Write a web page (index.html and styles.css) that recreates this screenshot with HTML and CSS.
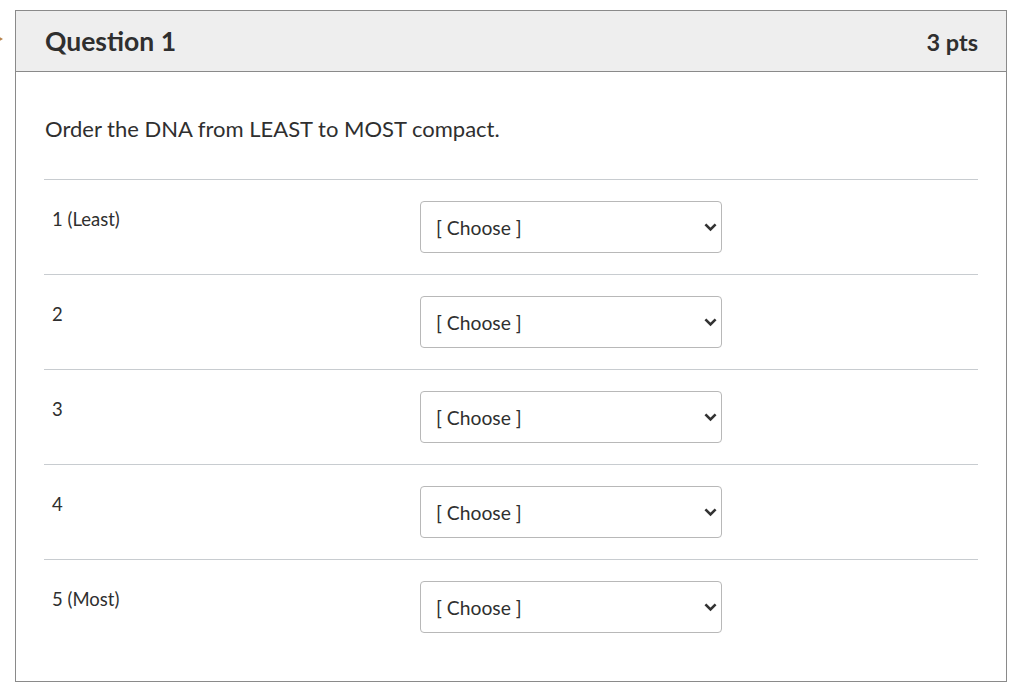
FILE: index.html
```html
<!DOCTYPE html>
<html lang="en">
<head>
<meta charset="utf-8">
<title>Question 1</title>
<link rel="stylesheet" href="styles.css">
</head>
<body>
<div class="flag"></div>
<div class="question">
  <div class="q-header">
    <span class="q-name">Question 1</span>
    <span class="q-pts">3 pts</span>
  </div>
  <div class="q-body">
    <p class="q-text">Order the DNA from LEAST to MOST compact.</p>
    <div class="answers">
      <div class="row">
        <div class="label">1 (Least)</div>
        <div class="select"><span>[ Choose ]</span><svg class="chev" viewBox="0 0 13 9" width="13" height="9"><path d="M1.4 1.4 L6.5 6.5 L11.6 1.4" fill="none" stroke="#333" stroke-width="2.6"/></svg></div>
      </div>
      <div class="row">
        <div class="label">2</div>
        <div class="select"><span>[ Choose ]</span><svg class="chev" viewBox="0 0 13 9" width="13" height="9"><path d="M1.4 1.4 L6.5 6.5 L11.6 1.4" fill="none" stroke="#333" stroke-width="2.6"/></svg></div>
      </div>
      <div class="row">
        <div class="label">3</div>
        <div class="select"><span>[ Choose ]</span><svg class="chev" viewBox="0 0 13 9" width="13" height="9"><path d="M1.4 1.4 L6.5 6.5 L11.6 1.4" fill="none" stroke="#333" stroke-width="2.6"/></svg></div>
      </div>
      <div class="row">
        <div class="label">4</div>
        <div class="select"><span>[ Choose ]</span><svg class="chev" viewBox="0 0 13 9" width="13" height="9"><path d="M1.4 1.4 L6.5 6.5 L11.6 1.4" fill="none" stroke="#333" stroke-width="2.6"/></svg></div>
      </div>
      <div class="row">
        <div class="label">5 (Most)</div>
        <div class="select"><span>[ Choose ]</span><svg class="chev" viewBox="0 0 13 9" width="13" height="9"><path d="M1.4 1.4 L6.5 6.5 L11.6 1.4" fill="none" stroke="#333" stroke-width="2.6"/></svg></div>
      </div>
    </div>
  </div>
</div>
</body>
</html>
```

FILE: styles.css
```css
html, body {
  margin: 0;
  padding: 0;
  background: #fff;
}
body {
  font-family: Lato, "Noto Sans", sans-serif;
  color: #2f2f2f;
  position: relative;
  height: 691px;
  overflow: hidden;
}
.flag {
  position: absolute;
  left: -4px;
  top: 35px;
  width: 0;
  height: 0;
  border-top: 4px solid transparent;
  border-bottom: 4px solid transparent;
  border-left: 7px solid #b9854f;
}
.question {
  margin: 10px 0 0 15px;
  width: 990px;
  height: 670px;
  border: 1px solid #8a8a8a;
  box-sizing: content-box;
}
.q-header {
  height: 60px;
  background: #eeeeee;
  border-bottom: 1px solid #8a8a8a;
  display: flex;
  align-items: center;
  justify-content: space-between;
  padding: 0 28px 0 29px;
}
.q-name {
  font-weight: 700;
  font-size: 26.5px;
}
.q-pts {
  font-weight: 700;
  font-size: 23.5px;
  padding-top: 1px;
}
.q-body {
  padding: 44px 28px 0 28px;
}
.q-text {
  margin: 0 0 37px 1px;
  font-size: 22px;
  line-height: 26px;
}
.row {
  border-top: 1px solid #c8ccd0;
  display: flex;
  align-items: flex-start;
  padding: 21px 0 21px 8px;
}
.label {
  width: 368px;
  font-size: 18.5px;
  line-height: 22px;
  padding-top: 7px;
}
.select {
  width: 281px;
  height: 50px;
  border: 1px solid #b8b8b8;
  border-radius: 4px;
  display: flex;
  align-items: center;
  justify-content: space-between;
  padding: 0 4px 0 15px;
  box-sizing: content-box;
  font-size: 19.3px;
}
.select span {
  padding-top: 1px;
}
.chev {
  display: block;
  margin-top: 1px;
}
```
